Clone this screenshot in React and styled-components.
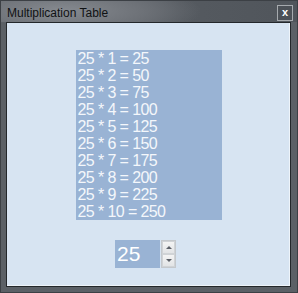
import React from "react";
import styled, { createGlobalStyle } from "styled-components";

const Global = createGlobalStyle`
  html, body { margin: 0; padding: 0; background: #3a3e43; }
  body { font-family: "Liberation Sans", Arial, sans-serif; }
`;

const rows = [1, 2, 3, 4, 5, 6, 7, 8, 9, 10];

export default function App() {
  const n = 25;
  return (
    <>
      <Global />
      <Window>
        <TitleBar>
          <Title>Multiplication Table</Title>
          <CloseButton>x</CloseButton>
        </TitleBar>
        <Client>
          <ListBox>
            {rows.map((i) => (
              <Row key={i}>
                {n} * {i} = {n * i}
              </Row>
            ))}
          </ListBox>
          <Spinner>
            <SpinValue>{n}</SpinValue>
            <SpinButtons>
              <SpinButton>
                <Arrow $up />
              </SpinButton>
              <SpinButton>
                <Arrow />
              </SpinButton>
            </SpinButtons>
          </Spinner>
        </Client>
      </Window>
    </>
  );
}

const Window = styled.div`
  width: 298px;
  height: 293px;
  box-sizing: border-box;
  display: flex;
  flex-direction: column;
  padding: 0 6px 5px 5px;
  background: #5b6066;
  border: 1px solid #3c4045;
`;

const TitleBar = styled.div`
  height: 21px;
  display: flex;
  align-items: center;
  justify-content: space-between;
  margin: 0 -6px 0 -5px;
  padding: 0 4px 0 6px;
  background: radial-gradient(ellipse 140px 30px at 60px 10px, #868a90 0%, #6f7379 55%, transparent 100%),
    linear-gradient(to right, #6c7076 0%, #555a60 60%, #50555b 100%);
`;

const Title = styled.span`
  font-family: "Segoe UI", "Liberation Sans", Arial, sans-serif;
  font-size: 12px;
  color: #101214;
  padding-top: 2px;
`;

const CloseButton = styled.div`
  width: 14px;
  height: 14px;
  margin-top: 3px;
  border: 1px solid #a6aaae;
  background: #4c5157;
  color: #ffffff;
  font-family: "Liberation Sans", Arial, sans-serif;
  font-weight: bold;
  font-size: 11px;
  line-height: 12px;
  text-align: center;
`;

const Client = styled.div`
  flex: 1;
  display: flex;
  flex-direction: column;
  align-items: center;
  border: 1px solid #23272b;
  box-shadow: inset -1px -1px 0 #eef4fa;
  background: #d7e4f2;
  padding-top: 27px;
`;

const ListBox = styled.div`
  width: 146px;
  height: 170px;
  box-sizing: border-box;
  padding-left: 2px;
  background: #99b3d4;
`;

const Row = styled.div`
  font-family: "Liberation Sans", Arial, sans-serif;
  font-size: 16px;
  line-height: 17px;
  letter-spacing: -0.6px;
  color: #f4f7fb;
  white-space: pre;
`;

const Spinner = styled.div`
  display: flex;
  margin-top: 20px;
  margin-right: 6px;
`;

const SpinValue = styled.div`
  width: 45px;
  height: 28px;
  box-sizing: border-box;
  padding-left: 2px;
  background: #99b3d4;
  color: #ffffff;
  font-family: "Liberation Sans", Arial, sans-serif;
  font-size: 21px;
  line-height: 28px;
`;

const SpinButtons = styled.div`
  display: flex;
  flex-direction: column;
  margin-left: 1px;
  border: 1px solid #c4c8cc;
  background: #ffffff;
`;

const SpinButton = styled.div`
  width: 13px;
  height: 13px;
  box-sizing: border-box;
  border: 1px solid #d0d3d6;
  background: linear-gradient(#f4f4f4, #e2e4e6);
  display: flex;
  align-items: center;
  justify-content: center;
`;

const Arrow = styled.div`
  width: 0;
  height: 0;
  border-left: 3px solid transparent;
  border-right: 3px solid transparent;
  ${(p) =>
    p.$up
      ? "border-bottom: 3px solid #5c6068;"
      : "border-top: 3px solid #5c6068;"}
`;
